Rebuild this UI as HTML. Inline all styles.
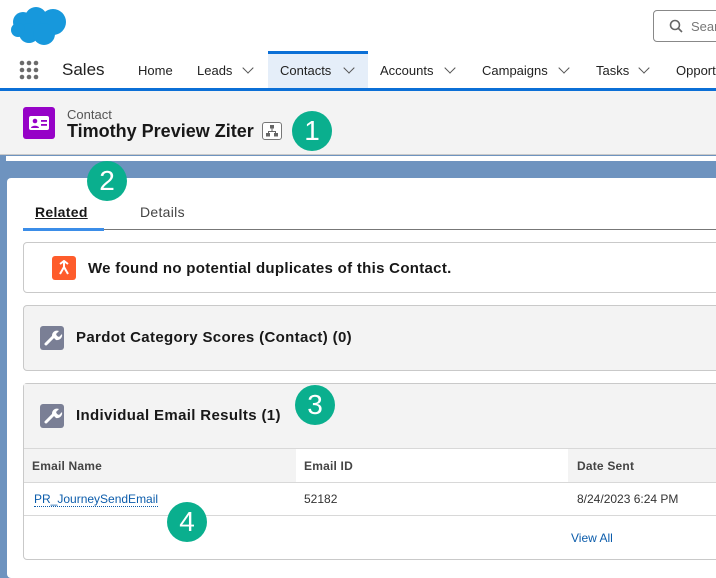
<!DOCTYPE html>
<html><head><style>
*{box-sizing:border-box;margin:0;padding:0}
body{width:716px;height:567px;overflow:hidden;position:relative;background:#6e93bf;font-family:"Liberation Sans",sans-serif;color:#181818}
.abs{position:absolute}
.badge{position:absolute;width:40px;height:40px;border-radius:50%;background:#0aaf8e;color:#fff;font-size:28px;text-align:center;line-height:40px}
.nav span{position:absolute;top:63px;font-size:13px;color:#222}
.chev{position:absolute;top:64px;width:8px;height:8px;border-right:1.5px solid #555;border-bottom:1.5px solid #555;transform:rotate(45deg)}
.card{position:absolute;left:23px;width:700px;border:1px solid #c9c9c9;border-radius:4px}
.wr{position:absolute;width:24px;height:24px;background:#7a7f95;border-radius:3px}
.title{position:absolute;font-size:15px;font-weight:bold;letter-spacing:0.35px}
</style></head><body>
<div class="abs" style="left:0;top:0;width:716px;height:50px;background:#fff"></div>
<svg class="abs" style="left:9px;top:5px" width="60" height="42" viewBox="0 0 60 42"><g fill="#1798dc"><circle cx="14" cy="17" r="10"/><circle cx="27" cy="13" r="11"/><circle cx="44" cy="17" r="13"/><circle cx="20" cy="28" r="10"/><circle cx="35" cy="29" r="11"/><circle cx="9" cy="25" r="7"/></g></svg>
<div class="abs" style="left:653px;top:10px;width:80px;height:32px;border:1px solid #888;border-radius:4px;background:#fff"></div>
<svg class="abs" style="left:669px;top:19px" width="14" height="14"><circle cx="6" cy="6" r="4.5" fill="none" stroke="#666" stroke-width="1.6"/><path d="M9 9l4 4" stroke="#666" stroke-width="1.6"/></svg>
<div class="abs" style="left:691px;top:19px;font-size:13px;color:#777">Sear</div>
<div class="abs" style="left:0;top:50px;width:716px;height:38px;background:#fff"></div>
<div class="abs" style="left:268px;top:51px;width:100px;height:37px;background:#e5eef9;border-top:3px solid #0b6fd6"></div>
<div class="abs" style="left:0;top:88px;width:716px;height:3px;background:#0b6fd6"></div>
<svg class="abs" style="left:19px;top:60px" width="22" height="22"><g fill="#6b6b6b"><circle cx="3" cy="3" r="2.3"/><circle cx="10" cy="3" r="2.3"/><circle cx="17" cy="3" r="2.3"/><circle cx="3" cy="10" r="2.3"/><circle cx="10" cy="10" r="2.3"/><circle cx="17" cy="10" r="2.3"/><circle cx="3" cy="17" r="2.3"/><circle cx="10" cy="17" r="2.3"/><circle cx="17" cy="17" r="2.3"/></g></svg>
<div class="nav">
<span style="left:62px;top:60px;font-size:17px">Sales</span>
<span style="left:138px">Home</span>
<span style="left:197px">Leads</span><i class="chev" style="left:244px"></i>
<span style="left:280px">Contacts</span><i class="chev" style="left:345px"></i>
<span style="left:380px">Accounts</span><i class="chev" style="left:446px"></i>
<span style="left:482px">Campaigns</span><i class="chev" style="left:560px"></i>
<span style="left:596px">Tasks</span><i class="chev" style="left:640px"></i>
<span style="left:676px">Opport</span>
</div>
<div class="abs" style="left:0;top:91px;width:716px;height:64px;background:#f3f3f3;border-bottom:1px solid #c9c9c9"></div>
<div class="abs" style="left:6px;top:156px;width:710px;height:5px;background:#fff"></div>
<div class="abs" style="left:23px;top:107px;width:32px;height:32px;background:#9602c7;border-radius:3px"></div>
<svg class="abs" style="left:29px;top:116px" width="20" height="14"><rect x="0" y="0" width="20" height="14" rx="2" fill="#fff"/><circle cx="6" cy="5" r="2.3" fill="#9602c7"/><path d="M2 12c0-3 8-3 8 0z" fill="#9602c7"/><rect x="12" y="4" width="6" height="1.8" fill="#9602c7"/><rect x="12" y="8" width="6" height="1.8" fill="#9602c7"/></svg>
<div class="abs" style="left:67px;top:107px;font-size:13px;color:#555">Contact</div>
<div class="abs" style="left:67px;top:121px;font-size:18px;font-weight:bold">Timothy Preview Ziter</div>
<div class="abs" style="left:262px;top:122px;width:20px;height:18px;border:1px solid #777;border-radius:3px;background:#fff"></div>
<svg class="abs" style="left:266px;top:125px" width="12" height="12"><g fill="#666"><rect x="4" y="0" width="4" height="3.5"/><rect x="0" y="8" width="4" height="3.5"/><rect x="8" y="8" width="4" height="3.5"/><path d="M5.5 3.5v2.5H2v2h1V7h6v1h1V6H6.5V3.5z"/></g></svg>
<div class="abs" style="left:7px;top:178px;width:720px;height:400px;background:#fff;border-radius:4px"></div>
<div class="abs" style="left:35px;top:204px;font-size:14px;font-weight:bold;text-decoration:underline;letter-spacing:0.3px">Related</div>
<div class="abs" style="left:140px;top:204px;font-size:14px;color:#444;letter-spacing:0.3px">Details</div>
<div class="abs" style="left:23px;top:229px;width:700px;height:1px;background:#777"></div>
<div class="abs" style="left:23px;top:228px;width:81px;height:3px;background:#3b8de8"></div>
<div class="card" style="top:242px;height:51px;background:#fff"></div>
<div class="abs" style="left:52px;top:256px;width:24px;height:24px;background:#fe5c2b;border-radius:3px"></div>
<svg class="abs" style="left:56px;top:260px" width="16" height="16"><path d="M8 1v6M4 4l4-3 4 3M8 7l-4 7M8 7l4 7" stroke="#fff" stroke-width="2" fill="none"/></svg>
<div class="abs" style="left:88px;top:260px;font-size:15px;font-weight:bold;letter-spacing:0.3px">We found no potential duplicates of this Contact.</div>
<div class="card" style="top:305px;height:66px;background:#f3f3f3"></div>
<div class="wr" style="top:326px;left:40px"></div>
<svg class="abs" style="left:40px;top:326px" width="24" height="24"><path d="M6 18l7-7" stroke="#fff" stroke-width="3" stroke-linecap="round"/><path d="M12 10a5 5 0 0 1 7-5l-3 3 1 2 2 1 3-3a5 5 0 0 1-6 6z" fill="#fff"/></svg>
<div class="title" style="left:76px;top:329px">Pardot Category Scores (Contact) (0)</div>
<div class="card" style="top:383px;height:177px;background:#fff"></div>
<div class="abs" style="left:24px;top:384px;width:700px;height:65px;background:#f3f3f3;border-bottom:1px solid #d8d8d8"></div>
<div class="wr" style="top:404px;left:40px"></div>
<svg class="abs" style="left:40px;top:404px" width="24" height="24"><path d="M6 18l7-7" stroke="#fff" stroke-width="3" stroke-linecap="round"/><path d="M12 10a5 5 0 0 1 7-5l-3 3 1 2 2 1 3-3a5 5 0 0 1-6 6z" fill="#fff"/></svg>
<div class="title" style="left:76px;top:407px">Individual Email Results (1)</div>
<div class="abs" style="left:24px;top:449px;width:700px;height:34px;background:#f3f3f3;border-bottom:1px solid #d8d8d8"></div>
<div class="abs" style="left:296px;top:449px;width:272px;height:33px;background:#fff"></div>
<div class="abs" style="left:32px;top:459px;font-size:12px;font-weight:bold;color:#444;letter-spacing:0.2px">Email Name</div>
<div class="abs" style="left:304px;top:459px;font-size:12px;font-weight:bold;color:#444;letter-spacing:0.2px">Email ID</div>
<div class="abs" style="left:577px;top:459px;font-size:12px;font-weight:bold;color:#444;letter-spacing:0.2px">Date Sent</div>
<div class="abs" style="left:34px;top:492px;font-size:12px;color:#0b5cab;border-bottom:1px dotted #0b5cab">PR_JourneySendEmail</div>
<div class="abs" style="left:304px;top:492px;font-size:12px;color:#333">52182</div>
<div class="abs" style="left:577px;top:492px;font-size:12px;color:#333">8/24/2023 6:24 PM</div>
<div class="abs" style="left:24px;top:515px;width:700px;height:1px;background:#d8d8d8"></div>
<div class="abs" style="left:571px;top:531px;font-size:12px;color:#0b5cab">View All</div>
<div class="badge" style="left:292px;top:111px">1</div>
<div class="badge" style="left:87px;top:161px">2</div>
<div class="badge" style="left:295px;top:385px">3</div>
<div class="badge" style="left:167px;top:502px">4</div>
</body></html>
